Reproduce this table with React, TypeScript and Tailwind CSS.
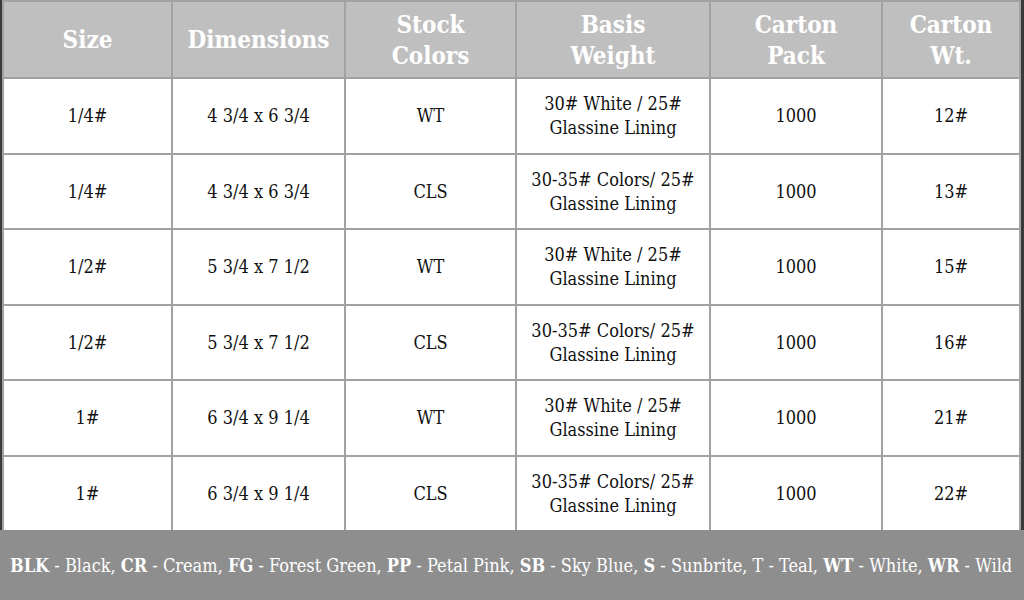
import React from "react";

const rows = [
  ["1/4#", "4 3/4 x 6 3/4", "WT", "30# White / 25#|Glassine Lining", "1000", "12#"],
  ["1/4#", "4 3/4 x 6 3/4", "CLS", "30-35# Colors/ 25#|Glassine Lining", "1000", "13#"],
  ["1/2#", "5 3/4 x 7 1/2", "WT", "30# White / 25#|Glassine Lining", "1000", "15#"],
  ["1/2#", "5 3/4 x 7 1/2", "CLS", "30-35# Colors/ 25#|Glassine Lining", "1000", "16#"],
  ["1#", "6 3/4 x 9 1/4", "WT", "30# White / 25#|Glassine Lining", "1000", "21#"],
  ["1#", "6 3/4 x 9 1/4", "CLS", "30-35# Colors/ 25#|Glassine Lining", "1000", "22#"],
];

const headers = ["Size", "Dimensions", "Stock|Colors", "Basis|Weight", "Carton|Pack", "Carton|Wt."];

const font = { fontFamily: '"DejaVu Serif Condensed", "DejaVu Serif", "Liberation Serif", serif', fontStretch: "condensed" } as React.CSSProperties;

function Lines({ text }: { text: string }) {
  const parts = text.split("|");
  return (
    <>
      {parts.map((p, i) => (
        <div key={i}>{p}</div>
      ))}
    </>
  );
}

export default function App() {
  return (
    <div className="w-[1024px] h-[600px] bg-white flex flex-col overflow-hidden" style={font}>
      <div className="flex h-[530px] bg-[#3a3a3a] pl-[2px] pr-[3px]">
        <div className="flex-1 bg-[#a2a2a2] p-[2px] pb-0 grid grid-cols-[167px_171px_169px_192px_170px_136px] grid-rows-[75px_74px_73px_74px_73px_74px_73px] gap-[2px]">
          {headers.map((h, i) => (
            <div
              key={"h" + i}
              className="bg-[#bfbfbf] text-white font-bold text-[24px] leading-[31px] flex flex-col items-center justify-center text-center"
            >
              <Lines text={h} />
            </div>
          ))}
          {rows.map((r, ri) =>
            r.map((c, ci) => (
              <div
                key={ri + "-" + ci}
                className="bg-white text-[#111111] text-[18px] leading-[24px] flex flex-col items-center justify-center text-center"
              >
                <Lines text={c} />
              </div>
            ))
          )}
        </div>
      </div>
      <div className="flex-1 bg-[#8e8e8e] text-white text-[18px] flex items-center pl-[10px] whitespace-nowrap">
        <span>
          <b>BLK</b> - Black, <b>CR</b> - Cream, <b>FG</b> - Forest Green, <b>PP</b> - Petal Pink, <b>SB</b> - Sky Blue, <b>S</b> - Sunbrite, T - Teal, <b>WT</b> - White, <b>WR</b> - Wild
        </span>
      </div>
    </div>
  );
}
